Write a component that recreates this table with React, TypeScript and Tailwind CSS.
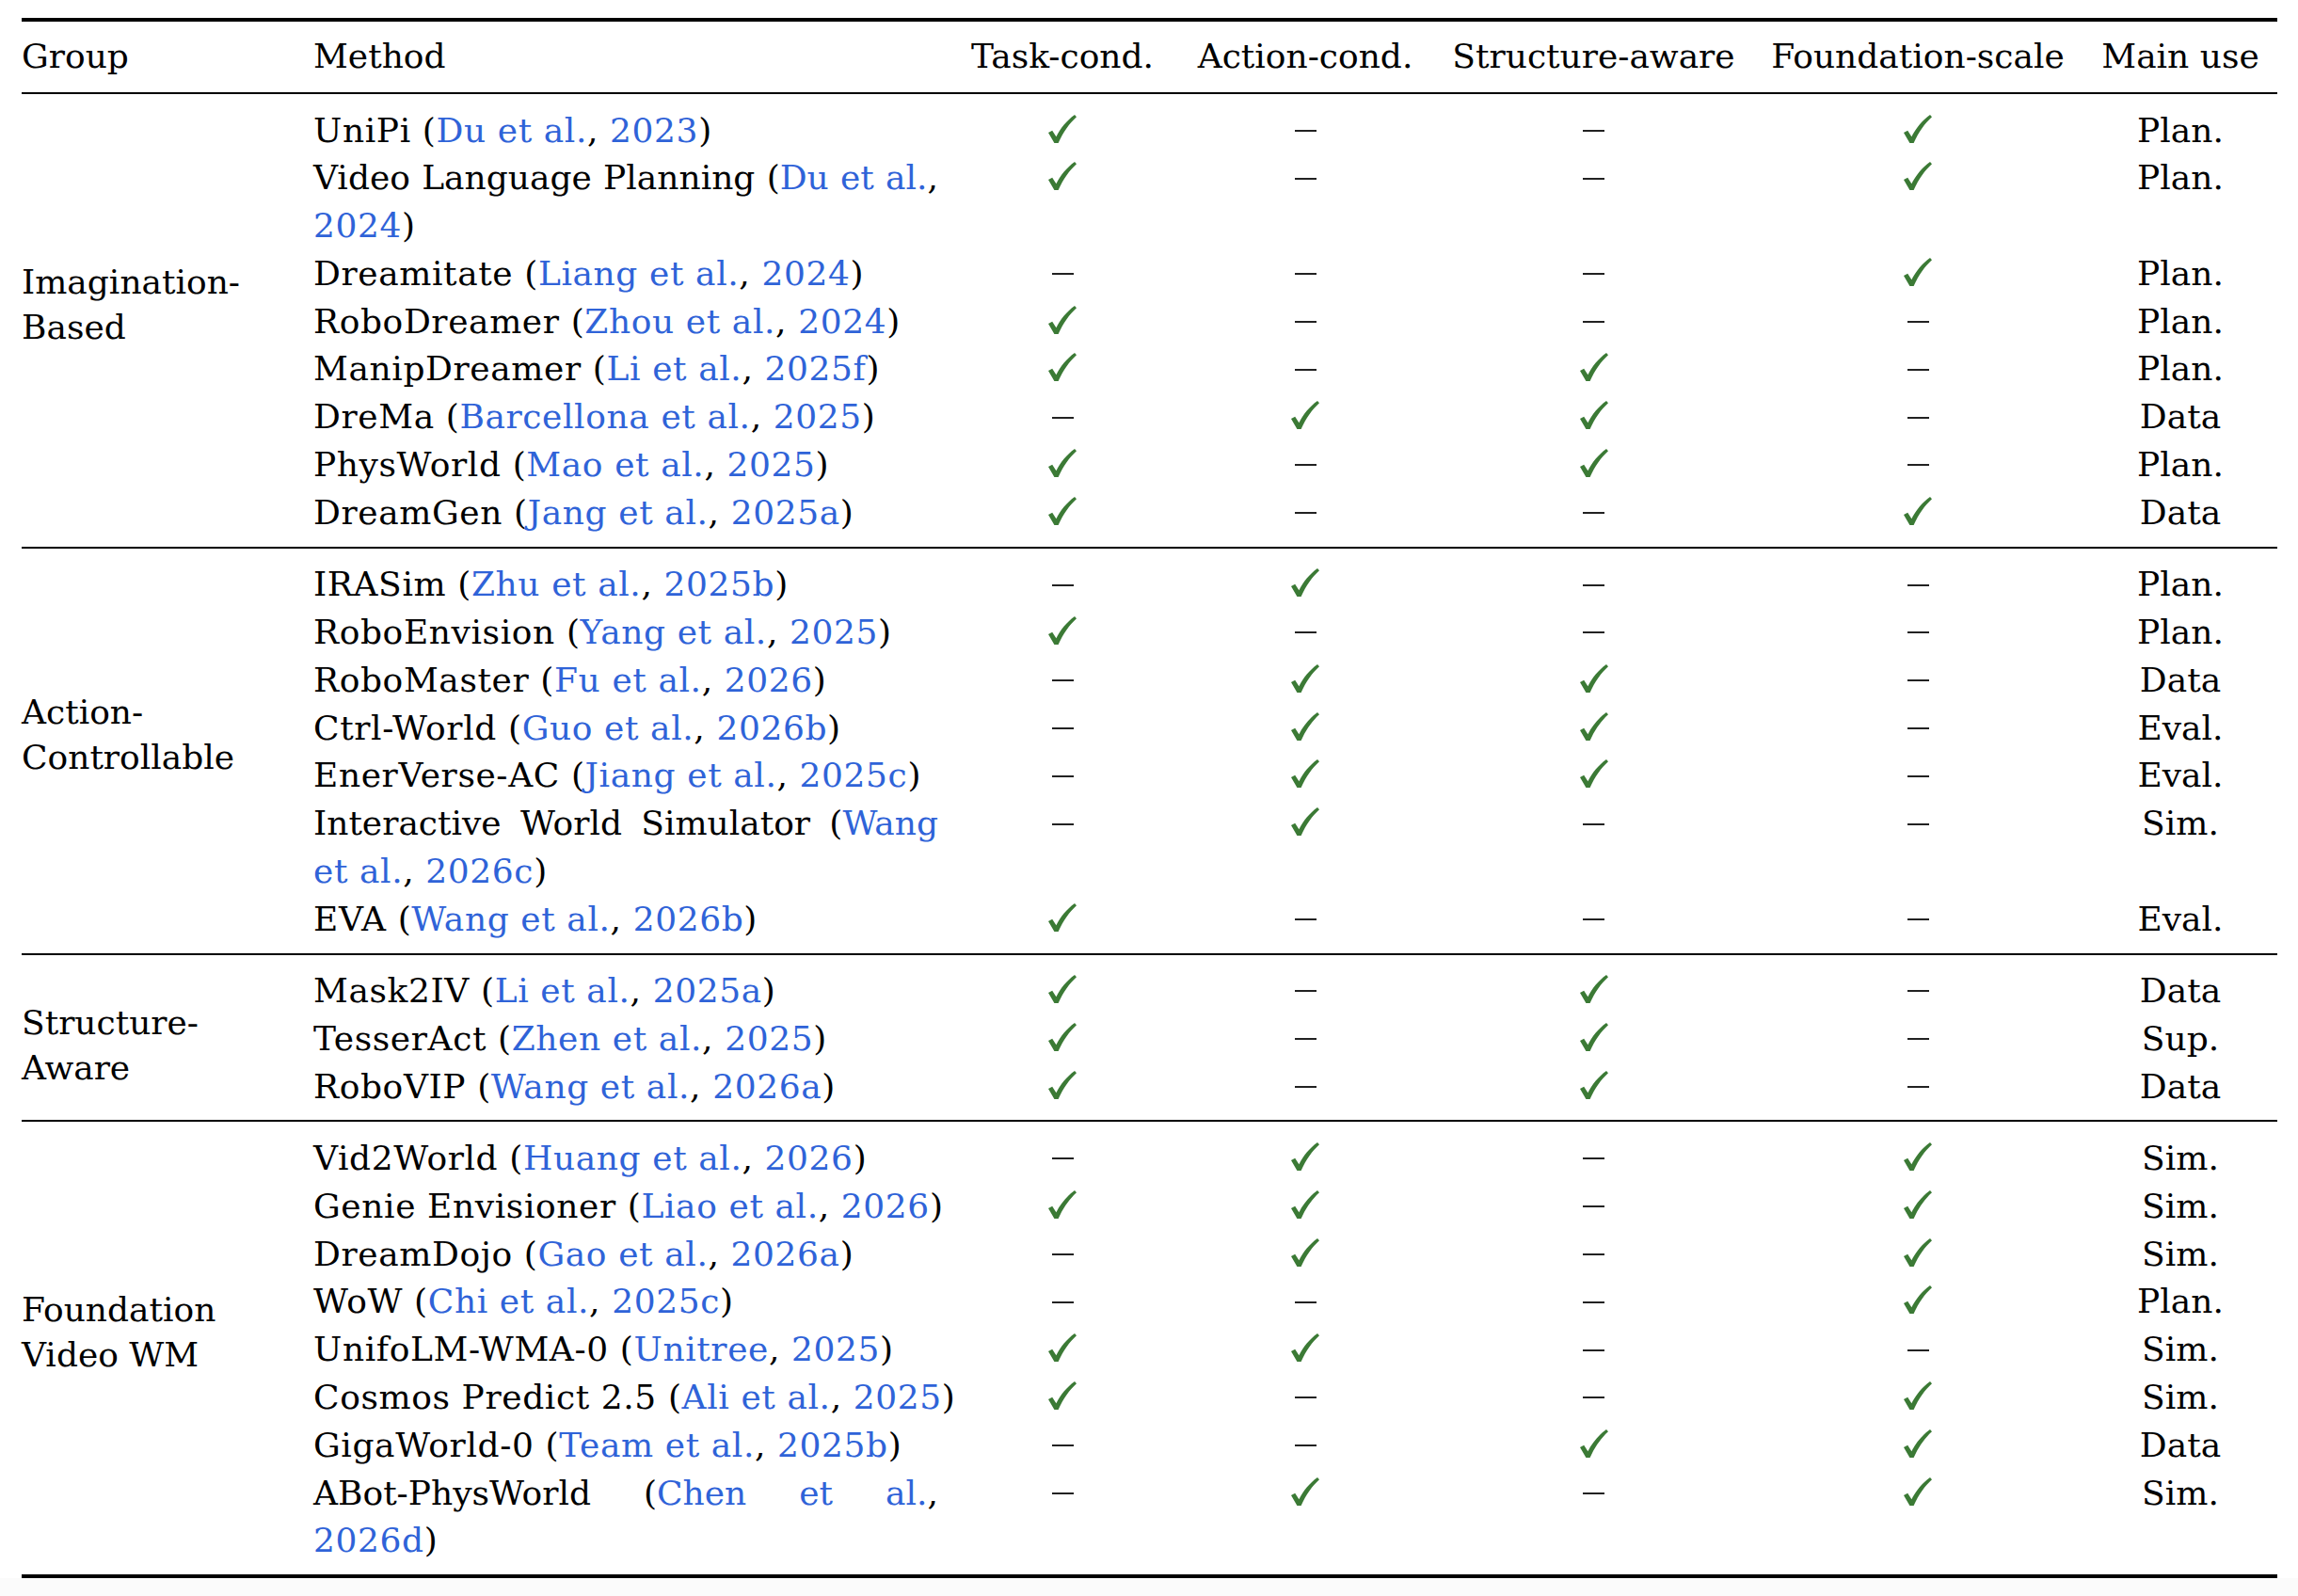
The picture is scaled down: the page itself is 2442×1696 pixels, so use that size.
import React from 'react';

type Row = {
  method: React.ReactNode;
  marks: [boolean, boolean, boolean, boolean];
  use: string;
  wrapped?: boolean;
};

type Group = {
  label: React.ReactNode;
  labelHeight: string;
  rows: Row[];
};

const Cite = ({ a, y }: { a: string; y: string }) => (
  <>
    (<span className="text-[#2f63d8]">{a}</span>, <span className="text-[#2f63d8]">{y}</span>)
  </>
);

// two-line cell: first line stretched like a justified LaTeX paragraph
const Wrapped = ({ first, second }: { first: React.ReactNode; second: React.ReactNode }) => (
  <>
    <div className="text-justify [text-align-last:justify]">{first}</div>
    <div className="tracking-[0.6px]">{second}</div>
  </>
);

const Check = () => (
  <svg viewBox="0 0 30 30" className="w-[30px] h-[30px] mt-[8px]" fill="#3b7a35">
    <path d="M0 19 L4.2 16.8 L8.4 23.2 C12.8 14.5 19.6 6 28 0 L30 2.2 C22.5 9 16 18 10.6 30 L6.4 30 Z" />
  </svg>
);

const Mark = ({ on }: { on: boolean }) =>
  on ? (
    <div className="flex justify-center items-start h-[50.8px]">
      <Check />
    </div>
  ) : (
    <div className="flex justify-center items-center h-[50.8px]">
      <div className="w-[23px] h-[2px] bg-[#222]" />
    </div>
  );

const groups: Group[] = [
  {
    label: (
      <>
        Imagination-
        <br />
        Based
      </>
    ),
    labelHeight: 'h-[406.4px]',
    rows: [
      { method: <>UniPi <Cite a="Du et al." y="2023" /></>, marks: [true, false, false, true], use: 'Plan.' },
      {
        method: (
          <Wrapped
            first={<>Video Language Planning (<span className="text-[#2f63d8]">Du et al.</span>,</>}
            second={<><span className="text-[#2f63d8]">2024</span>)</>}
          />
        ),
        marks: [true, false, false, true],
        use: 'Plan.',
        wrapped: true,
      },
      { method: <>Dreamitate <Cite a="Liang et al." y="2024" /></>, marks: [false, false, false, true], use: 'Plan.' },
      { method: <>RoboDreamer <Cite a="Zhou et al." y="2024" /></>, marks: [true, false, false, false], use: 'Plan.' },
      { method: <>ManipDreamer <Cite a="Li et al." y="2025f" /></>, marks: [true, false, true, false], use: 'Plan.' },
      { method: <>DreMa <Cite a="Barcellona et al." y="2025" /></>, marks: [false, true, true, false], use: 'Data' },
      { method: <>PhysWorld <Cite a="Mao et al." y="2025" /></>, marks: [true, false, true, false], use: 'Plan.' },
      { method: <>DreamGen <Cite a="Jang et al." y="2025a" /></>, marks: [true, false, false, true], use: 'Data' },
    ],
  },
  {
    label: (
      <>
        Action-
        <br />
        Controllable
      </>
    ),
    labelHeight: 'h-[355.6px]',
    rows: [
      { method: <>IRASim <Cite a="Zhu et al." y="2025b" /></>, marks: [false, true, false, false], use: 'Plan.' },
      { method: <>RoboEnvision <Cite a="Yang et al." y="2025" /></>, marks: [true, false, false, false], use: 'Plan.' },
      { method: <>RoboMaster <Cite a="Fu et al." y="2026" /></>, marks: [false, true, true, false], use: 'Data' },
      { method: <>Ctrl-World <Cite a="Guo et al." y="2026b" /></>, marks: [false, true, true, false], use: 'Eval.' },
      { method: <>EnerVerse-AC <Cite a="Jiang et al." y="2025c" /></>, marks: [false, true, true, false], use: 'Eval.' },
      {
        method: (
          <Wrapped
            first={<>Interactive World Simulator (<span className="text-[#2f63d8]">Wang</span></>}
            second={<><span className="text-[#2f63d8]">et al.</span>, <span className="text-[#2f63d8]">2026c</span>)</>}
          />
        ),
        marks: [false, true, false, false],
        use: 'Sim.',
        wrapped: true,
      },
      { method: <>EVA <Cite a="Wang et al." y="2026b" /></>, marks: [true, false, false, false], use: 'Eval.' },
    ],
  },
  {
    label: (
      <>
        Structure-
        <br />
        Aware
      </>
    ),
    labelHeight: 'h-[152.4px]',
    rows: [
      { method: <>Mask2IV <Cite a="Li et al." y="2025a" /></>, marks: [true, false, true, false], use: 'Data' },
      { method: <>TesserAct <Cite a="Zhen et al." y="2025" /></>, marks: [true, false, true, false], use: 'Sup.' },
      { method: <>RoboVIP <Cite a="Wang et al." y="2026a" /></>, marks: [true, false, true, false], use: 'Data' },
    ],
  },
  {
    label: (
      <>
        Foundation
        <br />
        Video WM
      </>
    ),
    labelHeight: 'h-[406.4px]',
    rows: [
      { method: <>Vid2World <Cite a="Huang et al." y="2026" /></>, marks: [false, true, false, true], use: 'Sim.' },
      { method: <>Genie Envisioner <Cite a="Liao et al." y="2026" /></>, marks: [true, true, false, true], use: 'Sim.' },
      { method: <>DreamDojo <Cite a="Gao et al." y="2026a" /></>, marks: [false, true, false, true], use: 'Sim.' },
      { method: <>WoW <Cite a="Chi et al." y="2025c" /></>, marks: [false, false, false, true], use: 'Plan.' },
      { method: <>UnifoLM-WMA-0 <Cite a="Unitree" y="2025" /></>, marks: [true, true, false, false], use: 'Sim.' },
      { method: <>Cosmos Predict 2.5 <Cite a="Ali et al." y="2025" /></>, marks: [true, false, false, true], use: 'Sim.' },
      { method: <>GigaWorld-0 <Cite a="Team et al." y="2025b" /></>, marks: [false, false, true, true], use: 'Data' },
      {
        method: (
          <Wrapped
            first={<>ABot-PhysWorld (<span className="text-[#2f63d8]">Chen et al.</span>,</>}
            second={<><span className="text-[#2f63d8]">2026d</span>)</>}
          />
        ),
        marks: [false, true, false, true],
        use: 'Sim.',
        wrapped: true,
      },
    ],
  },
];

const headers = ['Task-cond.', 'Action-cond.', 'Structure-aware', 'Foundation-scale', 'Main use'];

export default function App() {
  return (
    <div className="min-h-[1696px] flex flex-col bg-white text-black font-['DejaVu_Serif','Liberation_Serif',serif] text-[36px]">
      <div className="w-[2397px] ml-[23px] pt-[19px]">
        <div className="h-[4px] bg-black" />

        {/* header */}
        <div className="grid grid-cols-[310px_676px_240px_276px_337px_352px_206px] items-center h-[75px] leading-[50.8px]">
          <div>Group</div>
          <div>Method</div>
          {headers.map(h => (
            <div key={h} className="text-center whitespace-nowrap">
              {h}
            </div>
          ))}
        </div>
        <div className="h-[2px] bg-black" />

        {groups.map((g, gi) => (
          <React.Fragment key={gi}>
            <div className="flex pt-[13.5px] pb-[10px]">
              <div className="w-[310px] shrink-0">
                <div className={`${g.labelHeight} flex flex-col justify-center translate-y-[7px] leading-[48px]`}>
                  <div>{g.label}</div>
                </div>
              </div>
              <div className="grid grid-cols-[676px_240px_276px_337px_352px_206px] leading-[50.8px]">
                {g.rows.map((r, ri) => (
                  <React.Fragment key={ri}>
                    <div className={r.wrapped ? 'pr-[12px]' : 'pr-[12px] whitespace-nowrap tracking-[0.6px]'}>
                      {r.method}
                    </div>
                    {r.marks.map((m, mi) => (
                      <Mark key={mi} on={m} />
                    ))}
                    <div className="text-center">{r.use}</div>
                  </React.Fragment>
                ))}
              </div>
            </div>
            {gi < groups.length - 1 ? <div className="h-[2px] bg-black" /> : <div className="h-[4px] bg-black" />}
          </React.Fragment>
        ))}
      </div>
      <div className="flex-1 bg-[#fbfbfb]" />
    </div>
  );
}
